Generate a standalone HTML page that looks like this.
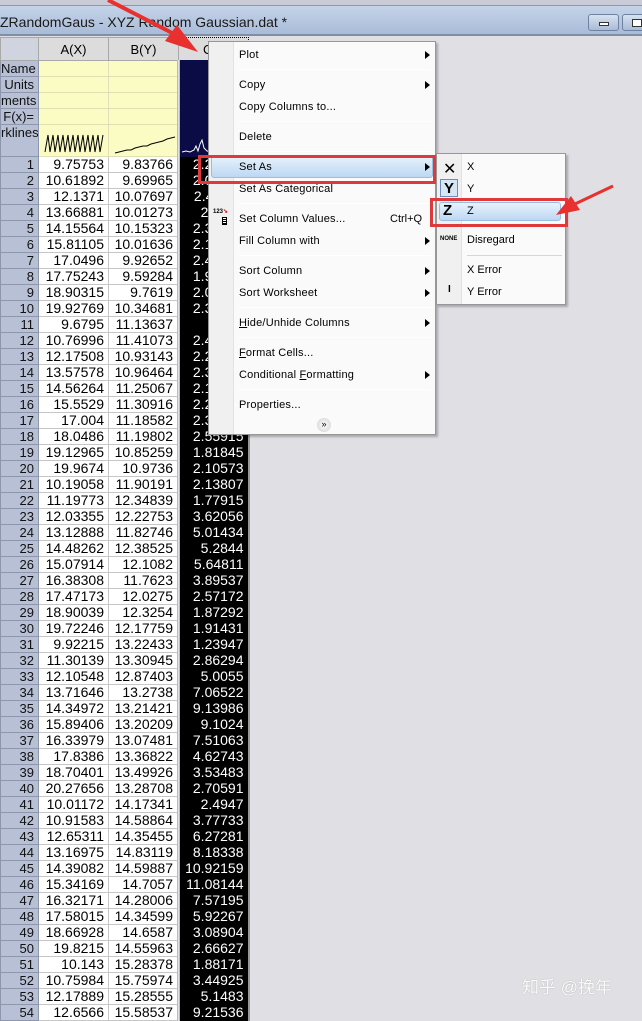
<!DOCTYPE html>
<html><head><meta charset="utf-8"><style>
*{margin:0;padding:0;box-sizing:border-box}
body{width:642px;height:1013px;overflow:hidden;background:#e0dfe4;position:relative;font-family:"Liberation Sans",Arial,sans-serif}
#top{position:absolute;left:0;top:0;width:642px;height:6px;background:#c9ccd6;border-bottom:1px solid #8e98ad}
#title{position:absolute;left:0;top:6px;width:642px;height:30px;background:linear-gradient(#c4d3e8,#a9bcd8);border-bottom:2px solid #7f8fa8;font-size:14px;color:#1a1a1a;line-height:32px;padding-left:0}
.btn{position:absolute;top:8px;width:31px;height:17px;border:1px solid #6f82a2;border-radius:3px;background:linear-gradient(#d7e2f1,#a9bbd6)}
table{position:absolute;left:0;top:37px;width:248px;border-collapse:collapse;table-layout:fixed;font-size:14px}
td{height:16px;border:1px solid #c6c6c6;text-align:right;padding:0 4px 0 0;white-space:nowrap;overflow:hidden;line-height:15px;color:#000}
td.h{background:#b8c0d6;border-color:#8e96ae;color:#111;font-size:13px}
td.y{background:#fbfbc4;border-color:#e0e0b4}
td.c{background:#000;color:#fff;border-color:#000;border-left:3px double #bbb;border-right:2px solid #999}
td.n{background:#0b0b45;border-color:#0b0b45;border-left:3px double #bbb;border-right:2px solid #999}
td.w{background:#fff}
tr.hd td{height:23px;background:#dcdcdc;border-color:#a8a8a8;text-align:center;padding:0;font-size:13px}
#menu{position:absolute;left:208px;top:41px;width:228px;height:394px;background:#fafafa;border:1px solid #979797;box-shadow:2px 2px 2px rgba(0,0,0,.25);font-size:11px;color:#000}
#menu .ic{position:absolute;left:0;top:0;width:25px;height:100%;background:#f0f0f0;border-right:1px solid #e2e2e2}
.it{position:absolute;left:30px;font-size:11px;letter-spacing:.2px}
.ar{position:absolute;left:216px;width:0;height:0;border-top:4px solid transparent;border-bottom:4px solid transparent;border-left:5px solid #000}
.sep{position:absolute;left:30px;width:192px;height:1px;background:#d6d6d6;border-bottom:1px solid #fff}
.hl{position:absolute;background:linear-gradient(#e8f2fc,#bdd8f3);border:1px solid #9bbde0;border-radius:3px}
#sub{position:absolute;left:436px;top:153px;width:130px;height:152px;background:#fafafa;border:1px solid #979797;box-shadow:2px 2px 2px rgba(0,0,0,.25);font-size:11px}
.rb{position:absolute;border:3px solid #e0393b}
</style></head><body>
<div id="top"></div>
<div id="title">ZRandomGaus - XYZ Random Gaussian.dat *
<div class="btn" style="left:588px"><div style="position:absolute;left:10px;top:7px;width:10px;height:4px;border:1px solid #333;background:#fff"></div></div>
<div class="btn" style="left:622px;width:30px"><div style="position:absolute;left:9px;top:4px;width:10px;height:8px;border:1px solid #333;background:#fff"></div></div>
</div>
<table>
<colgroup><col style="width:38px"><col style="width:70px"><col style="width:70px"><col style="width:70px"></colgroup>
<tr class="hd"><td class="h" style="background:#d0d4de"></td><td>A(X)</td><td>B(Y)</td><td style="border:1px dotted #000;text-align:left;padding-left:24px">C</td></tr>
<tr><td class="h">Name</td><td class="y"></td><td class="y"></td><td class="n"></td></tr>
<tr><td class="h">Units</td><td class="y"></td><td class="y"></td><td class="n"></td></tr>
<tr><td class="h">ments</td><td class="y"></td><td class="y"></td><td class="n"></td></tr>
<tr><td class="h">F(x)=</td><td class="y"></td><td class="y"></td><td class="n"></td></tr>
<tr><td class="h" style="height:32px;vertical-align:top">rklines</td><td class="y" style="padding:0"><svg width="68" height="31" style="display:block"><polyline fill="none" stroke="#000" stroke-width="1" points="6,27 9,10 11,27 14,10 16,27 19,10 21,27 24,10 26,27 29,10 31,27 34,10 36,27 39,10 41,27 44,10 46,27 49,10 51,27 54,10 56,27 59,10 61,27 64,10"/></svg></td><td class="y" style="padding:0"><svg width="68" height="31" style="display:block"><polyline fill="none" stroke="#000" stroke-width="1" points="6,28 10,27 14,26 18,25 22,25 26,23 30,22 34,21 38,21 42,19 46,18 50,17 54,16 58,14 62,13 66,12"/></svg></td><td class="n" style="padding:0"><svg width="64" height="31" style="display:block"><polyline fill="none" stroke="#fff" stroke-width="1" points="2,27 6,26 10,27 14,25 16,21 18,26 20,19 22,15 24,23 27,26 30,27"/></svg></td></tr>
<tr><td class="h">1</td><td class="w">9.75753</td><td class="w">9.83766</td><td class="c">2.21456</td></tr>
<tr><td class="h">2</td><td class="w">10.61892</td><td class="w">9.69965</td><td class="c">2.03415</td></tr>
<tr><td class="h">3</td><td class="w">12.1371</td><td class="w">10.07697</td><td class="c">2.41187</td></tr>
<tr><td class="h">4</td><td class="w">13.66881</td><td class="w">10.01273</td><td class="c">2.5061</td></tr>
<tr><td class="h">5</td><td class="w">14.15564</td><td class="w">10.15323</td><td class="c">2.37702</td></tr>
<tr><td class="h">6</td><td class="w">15.81105</td><td class="w">10.01636</td><td class="c">2.19213</td></tr>
<tr><td class="h">7</td><td class="w">17.0496</td><td class="w">9.92652</td><td class="c">2.46121</td></tr>
<tr><td class="h">8</td><td class="w">17.75243</td><td class="w">9.59284</td><td class="c">1.96342</td></tr>
<tr><td class="h">9</td><td class="w">18.90315</td><td class="w">9.7619</td><td class="c">2.05981</td></tr>
<tr><td class="h">10</td><td class="w">19.92769</td><td class="w">10.34681</td><td class="c">2.31276</td></tr>
<tr><td class="h">11</td><td class="w">9.6795</td><td class="w">11.13637</td><td class="c"></td></tr>
<tr><td class="h">12</td><td class="w">10.76996</td><td class="w">11.41073</td><td class="c">2.40933</td></tr>
<tr><td class="h">13</td><td class="w">12.17508</td><td class="w">10.93143</td><td class="c">2.24506</td></tr>
<tr><td class="h">14</td><td class="w">13.57578</td><td class="w">10.96464</td><td class="c">2.32718</td></tr>
<tr><td class="h">15</td><td class="w">14.56264</td><td class="w">11.25067</td><td class="c">2.14952</td></tr>
<tr><td class="h">16</td><td class="w">15.5529</td><td class="w">11.30916</td><td class="c">2.27489</td></tr>
<tr><td class="h">17</td><td class="w">17.004</td><td class="w">11.18582</td><td class="c">2.36617</td></tr>
<tr><td class="h">18</td><td class="w">18.0486</td><td class="w">11.19802</td><td class="c">2.55915</td></tr>
<tr><td class="h">19</td><td class="w">19.12965</td><td class="w">10.85259</td><td class="c">1.81845</td></tr>
<tr><td class="h">20</td><td class="w">19.9674</td><td class="w">10.9736</td><td class="c">2.10573</td></tr>
<tr><td class="h">21</td><td class="w">10.19058</td><td class="w">11.90191</td><td class="c">2.13807</td></tr>
<tr><td class="h">22</td><td class="w">11.19773</td><td class="w">12.34839</td><td class="c">1.77915</td></tr>
<tr><td class="h">23</td><td class="w">12.03355</td><td class="w">12.22753</td><td class="c">3.62056</td></tr>
<tr><td class="h">24</td><td class="w">13.12888</td><td class="w">11.82746</td><td class="c">5.01434</td></tr>
<tr><td class="h">25</td><td class="w">14.48262</td><td class="w">12.38525</td><td class="c">5.2844</td></tr>
<tr><td class="h">26</td><td class="w">15.07914</td><td class="w">12.1082</td><td class="c">5.64811</td></tr>
<tr><td class="h">27</td><td class="w">16.38308</td><td class="w">11.7623</td><td class="c">3.89537</td></tr>
<tr><td class="h">28</td><td class="w">17.47173</td><td class="w">12.0275</td><td class="c">2.57172</td></tr>
<tr><td class="h">29</td><td class="w">18.90039</td><td class="w">12.3254</td><td class="c">1.87292</td></tr>
<tr><td class="h">30</td><td class="w">19.72246</td><td class="w">12.17759</td><td class="c">1.91431</td></tr>
<tr><td class="h">31</td><td class="w">9.92215</td><td class="w">13.22433</td><td class="c">1.23947</td></tr>
<tr><td class="h">32</td><td class="w">11.30139</td><td class="w">13.30945</td><td class="c">2.86294</td></tr>
<tr><td class="h">33</td><td class="w">12.10548</td><td class="w">12.87403</td><td class="c">5.0055</td></tr>
<tr><td class="h">34</td><td class="w">13.71646</td><td class="w">13.2738</td><td class="c">7.06522</td></tr>
<tr><td class="h">35</td><td class="w">14.34972</td><td class="w">13.21421</td><td class="c">9.13986</td></tr>
<tr><td class="h">36</td><td class="w">15.89406</td><td class="w">13.20209</td><td class="c">9.1024</td></tr>
<tr><td class="h">37</td><td class="w">16.33979</td><td class="w">13.07481</td><td class="c">7.51063</td></tr>
<tr><td class="h">38</td><td class="w">17.8386</td><td class="w">13.36822</td><td class="c">4.62743</td></tr>
<tr><td class="h">39</td><td class="w">18.70401</td><td class="w">13.49926</td><td class="c">3.53483</td></tr>
<tr><td class="h">40</td><td class="w">20.27656</td><td class="w">13.28708</td><td class="c">2.70591</td></tr>
<tr><td class="h">41</td><td class="w">10.01172</td><td class="w">14.17341</td><td class="c">2.4947</td></tr>
<tr><td class="h">42</td><td class="w">10.91583</td><td class="w">14.58864</td><td class="c">3.77733</td></tr>
<tr><td class="h">43</td><td class="w">12.65311</td><td class="w">14.35455</td><td class="c">6.27281</td></tr>
<tr><td class="h">44</td><td class="w">13.16975</td><td class="w">14.83119</td><td class="c">8.18338</td></tr>
<tr><td class="h">45</td><td class="w">14.39082</td><td class="w">14.59887</td><td class="c">10.92159</td></tr>
<tr><td class="h">46</td><td class="w">15.34169</td><td class="w">14.7057</td><td class="c">11.08144</td></tr>
<tr><td class="h">47</td><td class="w">16.32171</td><td class="w">14.28006</td><td class="c">7.57195</td></tr>
<tr><td class="h">48</td><td class="w">17.58015</td><td class="w">14.34599</td><td class="c">5.92267</td></tr>
<tr><td class="h">49</td><td class="w">18.66928</td><td class="w">14.6587</td><td class="c">3.08904</td></tr>
<tr><td class="h">50</td><td class="w">19.8215</td><td class="w">14.55963</td><td class="c">2.66627</td></tr>
<tr><td class="h">51</td><td class="w">10.143</td><td class="w">15.28378</td><td class="c">1.88171</td></tr>
<tr><td class="h">52</td><td class="w">10.75984</td><td class="w">15.75974</td><td class="c">3.44925</td></tr>
<tr><td class="h">53</td><td class="w">12.17889</td><td class="w">15.28555</td><td class="c">5.1483</td></tr>
<tr><td class="h">54</td><td class="w">12.6566</td><td class="w">15.58537</td><td class="c">9.21536</td></tr>
</table>

<div id="menu"><div class="ic"></div>
<div class="it" style="top:7px">Plot</div><div class="ar" style="top:9px"></div>
<div class="sep" style="top:27px"></div>
<div class="it" style="top:37px">Copy</div><div class="ar" style="top:39px"></div>
<div class="it" style="top:59px">Copy Columns to...</div>
<div class="sep" style="top:79px"></div>
<div class="it" style="top:89px">Delete</div>
<div class="sep" style="top:109px"></div>
<div class="hl" style="left:2px;top:113px;width:222px;height:23px"></div>
<div class="it" style="top:119px">Set As</div><div class="ar" style="top:121px"></div>
<div class="it" style="top:141px">Set As Categorical</div>
<div class="sep" style="top:161px"></div>
<div style="position:absolute;left:4px;top:166px;font-size:6px;font-weight:bold">123<span style="color:#c00">➘</span></div>
<div style="position:absolute;left:13px;top:175px;width:5px;height:8px;border:1px solid #000;background:repeating-linear-gradient(#fff 0 1px,#000 1px 2px)"></div>
<div class="it" style="top:171px">Set Column Values...</div><div style="position:absolute;left:181px;top:171px">Ctrl+Q</div>
<div class="it" style="top:193px">Fill Column with</div><div class="ar" style="top:195px"></div>
<div class="sep" style="top:213px"></div>
<div class="it" style="top:223px">Sort Column</div><div class="ar" style="top:225px"></div>
<div class="it" style="top:245px">Sort Worksheet</div><div class="ar" style="top:247px"></div>
<div class="sep" style="top:265px"></div>
<div class="it" style="top:275px"><u>H</u>ide/Unhide Columns</div><div class="ar" style="top:277px"></div>
<div class="sep" style="top:295px"></div>
<div class="it" style="top:305px"><u>F</u>ormat Cells...</div>
<div class="it" style="top:327px">Conditional <u>F</u>ormatting</div><div class="ar" style="top:329px"></div>
<div class="sep" style="top:347px"></div>
<div class="it" style="top:357px">Properties...</div>
<div style="position:absolute;left:108px;top:376px;width:14px;height:14px;border-radius:7px;background:radial-gradient(#fff,#cfcfcf);font-size:9px;text-align:center;line-height:13px">»</div>
</div>

<div id="sub">
<div style="position:absolute;left:0;top:0;width:25px;height:100%;background:#f0f0f0;border-right:1px solid #e2e2e2"></div>
<div style="position:absolute;left:6px;top:5px;font-size:16px">✕</div>
<div style="position:absolute;left:30px;top:7px">X</div>
<div style="position:absolute;left:3px;top:25px;width:18px;height:18px;border:1px solid #6b8fb8;background:#d6e6f6;font-size:15px;font-weight:bold;text-align:center;line-height:18px">Y</div>
<div style="position:absolute;left:30px;top:29px">Y</div>
<div class="hl" style="left:2px;top:48px;width:122px;height:19px"></div>
<div style="position:absolute;left:6px;top:48px;font-size:15px;font-weight:bold">Z</div>
<div style="position:absolute;left:30px;top:51px">Z</div>
<div style="position:absolute;left:3px;top:82px;font-size:6px;font-weight:bold">NONE</div>
<div style="position:absolute;left:30px;top:80px;font-size:11px">Disregard</div>
<div style="position:absolute;left:30px;top:101px;width:95px;height:1px;background:#d6d6d6"></div>
<div style="position:absolute;left:30px;top:110px">X Error</div>
<div style="position:absolute;left:11px;top:130px;font-size:10px;font-weight:bold">I</div>
<div style="position:absolute;left:30px;top:132px">Y Error</div>
</div>

<div class="rb" style="left:198px;top:155px;width:238px;height:29px"></div>
<div class="rb" style="left:430px;top:198px;width:138px;height:29px"></div>

<svg style="position:absolute;left:0;top:0" width="642" height="1013">
<line x1="108" y1="0" x2="178" y2="36" stroke="#e8302f" stroke-width="4"/>
<polygon points="198,52 165,41 177,25" fill="#e8302f"/>
<line x1="613" y1="186" x2="575" y2="204" stroke="#e8302f" stroke-width="3"/>
<polygon points="556,215 571,196 580,210" fill="#e8302f"/>
</svg>
<div style="position:absolute;left:522px;top:973px;font-size:17px;color:#fbfbfb;font-family:'Liberation Sans','Noto Sans CJK SC',sans-serif;text-shadow:0 0 1px #999">知乎 @挽年</div>
</body></html>
